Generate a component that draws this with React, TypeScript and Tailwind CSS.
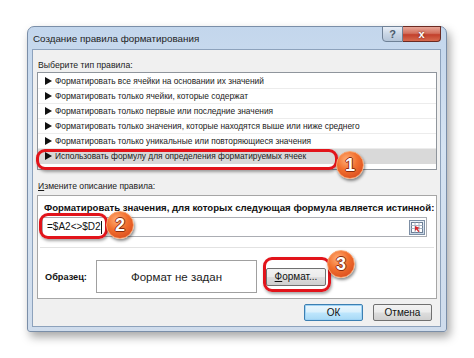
import React from "react";

const font = { fontFamily: '"Liberation Sans", Arial, sans-serif' };

function Tri() {
  return (
    <svg width="7" height="8" viewBox="0 0 7 8" className="shrink-0">
      <path d="M0 0 L7 4 L0 8 Z" fill="#111" />
    </svg>
  );
}

function Badge({ n, cls }: { n: string; cls: string }) {
  return (
    <div
      className={`absolute ${cls} w-[28px] h-[28px] rounded-full flex items-center justify-center border border-[#f7a36f] bg-[radial-gradient(circle_at_38%_30%,#ffae78_0%,#f2712f_42%,#d13e18_100%)] shadow-[1px_2px_3px_rgba(0,0,0,0.45)]`}
    >
      <span
        className="text-white font-bold text-[18px] leading-none [text-shadow:-1px_0_#8a2a0c,1px_0_#8a2a0c,0_-1px_#8a2a0c,0_1px_#8a2a0c]"
        style={{ fontFamily: '"Liberation Sans", Arial, sans-serif' }}
      >
        {n}
      </span>
    </div>
  );
}

export default function App() {
  const rows = [
    "Форматировать все ячейки на основании их значений",
    "Форматировать только ячейки, которые содержат",
    "Форматировать только первые или последние значения",
    "Форматировать только значения, которые находятся выше или ниже среднего",
    "Форматировать только уникальные или повторяющиеся значения",
    "Использовать формулу для определения форматируемых ячеек",
  ];
  return (
    <div className="relative w-[474px] h-[358px] bg-white pt-[26px] pl-[27px] overflow-hidden" style={font}>
      {/* dialog */}
      <div className="w-[420px] h-[306px] rounded-t-[7px] rounded-b-[3px] border border-[#7a8ea8] bg-[linear-gradient(180deg,#c3d6ec_0%,#d5e3f2_40%,#cfdcec_100%)] shadow-[3px_5px_10px_rgba(0,0,0,0.35)] flex flex-col">
        {/* title bar */}
        <div className="h-[22px] flex items-start relative">
          <span className="ml-[5px] mt-[5px] text-[9.8px] leading-[13px] text-[#1e1e1e]">
            Создание правила форматирования
          </span>
          <div className="absolute right-[5px] top-[-1px] flex">
            <div className="w-[21px] h-[16px] border border-[#6f8196] rounded-bl-[4px] bg-[linear-gradient(180deg,#e8eef6_0%,#c9d6e5_50%,#b5c5d8_100%)] flex items-center justify-center">
              <span className="text-[11px] leading-none text-[#4a5a6c] font-bold">?</span>
            </div>
            <div className="w-[38px] h-[16px] border border-l-0 border-[#6b2a22] rounded-br-[4px] bg-[linear-gradient(180deg,#e7a597_0%,#d3705d_45%,#c2402c_55%,#d76a4e_100%)] flex items-center justify-center">
              <span className="text-white text-[11px] font-bold leading-none [text-shadow:0_0_2px_#5a1a10]">x</span>
            </div>
          </div>
        </div>
        {/* client area */}
        <div className="ml-[4px] w-[409px] h-[278px] border border-[#8da2bc] bg-[#f0f0f0] flex flex-col">
          <div className="ml-[5px] mt-[8px] h-[14px] text-[8.7px] leading-[14px] text-[#1a1a1a]">
            Выберите тип правила:
          </div>
          <div className="ml-[4px] w-[400px] h-[98px] border border-[#8f959c] bg-white pt-[1px] flex flex-col">
            {rows.map((r, i) => (
              <div
                key={i}
                className={`h-[15px] flex items-center gap-[3px] pl-[7px] border-b ${i === 5 ? "bg-[#d9d9d9] border-[#d9d9d9]" : "border-[#ececec]"}`}
              >
                <Tri />
                <span className="text-[8.35px] leading-[14px] text-[#1a1a1a] whitespace-nowrap">{r}</span>
              </div>
            ))}
          </div>
          <div className="ml-[5px] mt-[9px] h-[14px] text-[8.6px] leading-[14px] text-[#1a1a1a]">
            <span className="underline">И</span>змените описание правила:
          </div>
          <div className="ml-[4px] mt-[2px] w-[400px] h-[104px] border border-[#a6a6a6] bg-white flex flex-col">
            <div className="ml-[6px] mt-[5px] h-[14px] text-[9.6px] leading-[14px] font-bold text-[#111] whitespace-nowrap">
              Форматировать значения, для которых следующая формула является истинной:
            </div>
            <div className="ml-[4px] mt-[2px] w-[385px] h-[20px] border border-[#abadb3] bg-white flex items-center">
              <span className="ml-[4px] text-[10px] leading-[14px] text-[#111]">=$A2&lt;&gt;$D2</span>
              <span className="w-px h-[13px] bg-[#111]" />
              <div className="ml-auto mr-[1px] w-[16px] h-[15px] border border-[#7d8fa5] bg-[linear-gradient(180deg,#e9f0f8,#c6d4e4)] flex items-center justify-center">
                <svg width="12" height="11" viewBox="0 0 12 11">
                  <rect x="0.5" y="0.5" width="11" height="10" fill="#fff" stroke="#6d7f95" />
                  <path d="M0.5 3.5 H11.5 M0.5 6.5 H11.5 M4 0.5 V10.5 M8 0.5 V10.5" stroke="#a9b6c6" strokeWidth="1" />
                  <path d="M4 4 L9 6 L6.5 6.8 L8.5 9.5 L7.3 10 L5.4 7.4 L4 9 Z" fill="#d4262b" />
                </svg>
              </div>
            </div>
            <div className="mt-[10px] mx-[2px] h-px bg-[#e2e2e2]" />
            <div className="mt-[12px] flex items-center">
              <span className="ml-[7px] w-[51px] text-[9.2px] leading-[14px] font-bold text-[#111]">Образец:</span>
              <div className="w-[161px] h-[33px] border border-[#a0a0a0] bg-white flex items-center justify-center">
                <span className="text-[11.5px] leading-[14px] text-[#222]">Формат не задан</span>
              </div>
              <div className="ml-[9px] w-[60px] h-[18px] rounded-[2px] border border-[#707070] bg-[linear-gradient(180deg,#f2f2f2_0%,#ebebeb_48%,#dddddd_52%,#cfcfcf_100%)] flex items-center justify-center">
                <span className="text-[10px] leading-none text-[#111]">
                  <span className="underline">Ф</span>ормат...
                </span>
              </div>
            </div>
          </div>
          <div className="mt-[5px] mr-[8px] flex justify-end gap-[10px]">
            <div className="w-[59px] h-[17px] rounded-[2px] border border-[#3c7fb1] bg-[linear-gradient(180deg,#eaf6fd_0%,#d9f0fc_48%,#bee6fd_52%,#a7d9f5_100%)] shadow-[inset_0_0_0_1px_#9fd3f5] flex items-center justify-center">
              <span className="text-[10px] leading-none text-[#111]">ОК</span>
            </div>
            <div className="w-[59px] h-[17px] rounded-[2px] border border-[#707070] bg-[linear-gradient(180deg,#f2f2f2_0%,#ebebeb_48%,#dddddd_52%,#cfcfcf_100%)] flex items-center justify-center">
              <span className="text-[10px] leading-none text-[#111]">Отмена</span>
            </div>
          </div>
        </div>
      </div>

      {/* annotations */}
      <div className="absolute left-[36px] top-[149px] w-[302px] h-[21px] border-[3px] border-[#e2141b] rounded-[9px] shadow-[1px_2px_3px_rgba(0,0,0,0.35)]" />
      <Badge n="1" cls="left-[336px] top-[151px]" />
      <div className="absolute left-[39px] top-[213px] w-[69px] h-[26px] border-[3px] border-[#e2141b] rounded-[9px] shadow-[1px_2px_3px_rgba(0,0,0,0.35)]" />
      <Badge n="2" cls="left-[106px] top-[211px]" />
      <div className="absolute left-[263px] top-[257px] w-[68px] h-[35px] border-[3px] border-[#e2141b] rounded-[9px] shadow-[1px_2px_3px_rgba(0,0,0,0.35)]" />
      <Badge n="3" cls="left-[327px] top-[250px]" />
    </div>
  );
}
